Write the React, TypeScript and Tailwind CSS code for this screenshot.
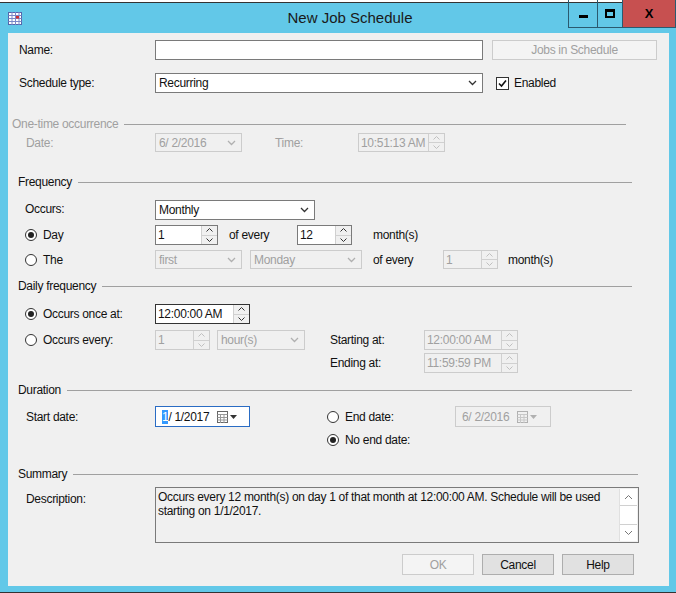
import React from "react";

const dis = "text-[#a0a0a0]";

function Chevron({ disabled }: { disabled?: boolean }) {
  return (
    <svg width="9" height="6" viewBox="0 0 9 6" className="mr-[5px] shrink-0">
      <path d="M1 1l3.5 3.5L8 1" fill="none" stroke={disabled ? "#b0b0b0" : "#333"} strokeWidth="1.3" />
    </svg>
  );
}

function Combo({ w, value, disabled }: { w: string; value: string; disabled?: boolean }) {
  return (
    <div
      className={`${w} h-full flex items-center justify-between border pl-[3px] whitespace-nowrap ${
        disabled ? "border-[#cccccc] text-[#a0a0a0] bg-[#f0f0f0]" : "border-[#7a7a7a] bg-white"
      }`}
    >
      <span>{value}</span>
      <Chevron disabled={disabled} />
    </div>
  );
}

function Spin({ w, value, disabled, focus }: { w: string; value: string; disabled?: boolean; focus?: boolean }) {
  const c = disabled ? "#c0c0c0" : "#333";
  return (
    <div
      className={`${w} h-full flex border whitespace-nowrap ${
        disabled ? "border-[#cccccc] text-[#a0a0a0]" : focus ? "border-[#333] bg-white" : "border-[#7a7a7a] bg-white"
      }`}
    >
      <span className="flex-1 pl-[2px] flex items-center overflow-hidden">{value}</span>
      <div className="w-[16px] shrink-0 flex flex-col border-l border-[#d0d0d0] bg-[#f0f0f0]">
        <div className="flex-1 flex items-center justify-center border-b border-[#d0d0d0]">
          <svg width="7" height="4" viewBox="0 0 7 4"><path d="M.5 3.5L3.5.5l3 3" fill="none" stroke={c} /></svg>
        </div>
        <div className="flex-1 flex items-center justify-center">
          <svg width="7" height="4" viewBox="0 0 7 4"><path d="M.5.5l3 3 3-3" fill="none" stroke={c} /></svg>
        </div>
      </div>
    </div>
  );
}

function Radio({ on, label, w }: { on?: boolean; label: string; w: string }) {
  return (
    <div className={`${w} flex items-center`}>
      <div className="w-[12px] h-[12px] rounded-full border border-[#333] bg-white flex items-center justify-center">
        {on && <div className="w-[6px] h-[6px] rounded-full bg-[#222]" />}
      </div>
      <span className="ml-[6px]">{label}</span>
    </div>
  );
}

function Header({ text, pr, pl, disabled }: { text: string; pr: string; pl: string; disabled?: boolean }) {
  return (
    <div className={`flex items-center h-[14px] ${pl} ${pr} ${disabled ? dis : ""}`}>
      <span>{text}</span>
      <div className="flex-1 ml-[6px] h-px bg-[#a0a0a0]" />
    </div>
  );
}

function DateBox({ w, value, disabled, focus }: { w: string; value: string; disabled?: boolean; focus?: boolean }) {
  return (
    <div
      className={`${w} h-full flex items-center border pl-[6px] whitespace-nowrap ${
        disabled ? "border-[#cccccc] text-[#a0a0a0]" : focus ? "border-[#2a6cc4] bg-white" : "border-[#7a7a7a]"
      }`}
    >
      {focus ? (
        <span>
          <span className="bg-[#3399ff] text-white">1</span>/  1/2017
        </span>
      ) : (
        <span>{value}</span>
      )}
      <svg width="22" height="12" viewBox="0 0 22 12" className="ml-[8px]">
        <rect x="0.5" y="0.5" width="10" height="11" fill="none" stroke={disabled ? "#b0b0b0" : "#666"} />
        <path d="M0.5 3.5h10M0.5 6.5h10M0.5 9h10M3.5 3v9M7 3v9" stroke={disabled ? "#c8c8c8" : "#999"} />
        <path d="M13 4h7l-3.5 4z" fill={disabled ? "#b0b0b0" : "#333"} />
      </svg>
    </div>
  );
}

function Btn({ label, disabled }: { label: string; disabled?: boolean }) {
  return (
    <div
      className={`w-[72px] h-full flex items-center justify-center border ${
        disabled ? "border-[#cccccc] text-[#a0a0a0] bg-[#f4f4f4]" : "border-[#adadad] bg-[#e1e1e1]"
      }`}
    >
      {label}
    </div>
  );
}

export default function App() {
  return (
    <div
      className="w-[676px] h-[593px] bg-white text-[12px] tracking-[-0.3px] text-[#111] overflow-hidden"
      style={{ fontFamily: '"Liberation Sans", Arial, sans-serif' }}
    >
      <div className="h-[3px] bg-white border-b border-[#333]" />
      <div className="w-[676px] bg-[#62c8e8] pl-[8px] pr-[7px] pb-[6px]">
        {/* title bar */}
        <div className="h-[30px] flex items-center">
          <svg width="14" height="13" viewBox="0 0 14 13">
            <rect x="0.5" y="0.5" width="13" height="12" fill="#fff" stroke="#5566aa" />
            <path d="M0.5 3.5h13M0.5 6.5h13M0.5 9.5h13M4 0v13M7.5 0v13M11 0v13" stroke="#7a88c8" />
            <rect x="8" y="4" width="3" height="2.5" fill="#d03030" />
          </svg>
          <div className="flex-1 text-center text-[15px] tracking-normal text-[#1a1a1a] pl-[110px]">New Job Schedule</div>
          <div className="flex self-start -mt-[4px] h-[29px] border border-[#2a5a70] mr-[-7px]">
            <div className="w-[29px] flex items-center justify-center border-r border-[#2a5a70]">
              <div className="w-[9px] h-[3px] bg-black mt-[6px]" />
            </div>
            <div className="w-[25px] flex items-center justify-center border-r border-[#2a5a70]">
              <div className="w-[10px] h-[9px] border-2 border-black border-t-[3px]" />
            </div>
            <div className="w-[52px] bg-[#c75050] flex items-center justify-center font-bold text-[13px] text-black">
              X
            </div>
          </div>
        </div>
        {/* body */}
        <div className="h-[553px] bg-[#f0f0f0] pt-[7px]">
          <div className="flex h-[20px] items-center pl-[11px]">
            <span className="w-[136px]">Name:</span>
            <div className="w-[328px] h-full border border-[#7a7a7a] bg-white" />
            <div className="ml-[9px] w-[165px] h-full border border-[#cccccc] bg-[#f4f4f4] text-[#a0a0a0] flex items-center justify-center">
              Jobs in Schedule
            </div>
          </div>
          <div className="flex h-[20px] items-center pl-[11px] mt-[13px]">
            <span className="w-[136px]">Schedule type:</span>
            <Combo w="w-[328px]" value="Recurring" />
            <div className="ml-[13px] w-[13px] h-[13px] border border-[#333] bg-white flex items-center justify-center">
              <svg width="9" height="9" viewBox="0 0 9 9"><path d="M1 4.5l2.5 2.5L8 1.5" fill="none" stroke="#111" strokeWidth="1.6" /></svg>
            </div>
            <span className="ml-[5px]">Enabled</span>
          </div>

          <div className="mt-[24px]"><Header text="One-time occurrence" pl="pl-[4px]" pr="pr-[43px]" disabled /></div>
          <div className={`flex h-[19px] items-center pl-[18px] mt-[2px] ${dis}`}>
            <span className="w-[129px]">Date:</span>
            <Combo w="w-[87px]" value="6/  2/2016" disabled />
            <span className="ml-[33px] w-[83px]">Time:</span>
            <Spin w="w-[87px]" value="10:51:13 AM" disabled />
          </div>

          <div className="mt-[23px]"><Header text="Frequency" pl="pl-[10px]" pr="pr-[37px]" /></div>
          <div className="flex h-[20px] items-center pl-[17px] mt-[11px]">
            <span className="w-[130px] self-start">Occurs:</span>
            <Combo w="w-[160px]" value="Monthly" />
          </div>
          <div className="flex h-[20px] items-center pl-[17px] mt-[5px]">
            <Radio on label="Day" w="w-[130px]" />
            <Spin w="w-[63px]" value="1" />
            <span className="ml-[11px] w-[68px]">of every</span>
            <Spin w="w-[55px]" value="12" />
            <span className="ml-[21px]">month(s)</span>
          </div>
          <div className="flex h-[19px] items-center pl-[17px] mt-[5px]">
            <Radio label="The" w="w-[130px]" />
            <Combo w="w-[87px]" value="first" disabled />
            <div className="ml-[8px] h-full"><Combo w="w-[112px]" value="Monday" disabled /></div>
            <span className="ml-[11px] w-[70px]">of every</span>
            <Spin w="w-[55px]" value="1" disabled />
            <span className="ml-[10px]">month(s)</span>
          </div>

          <div className="mt-[10px]"><Header text="Daily frequency" pl="pl-[10px]" pr="pr-[37px]" /></div>
          <div className="flex h-[20px] items-center pl-[17px] mt-[11px]">
            <Radio on label="Occurs once at:" w="w-[130px]" />
            <Spin w="w-[95px]" value="12:00:00 AM" focus />
          </div>
          <div className="flex h-[20px] items-center pl-[17px] mt-[6px]">
            <Radio label="Occurs every:" w="w-[130px]" />
            <Spin w="w-[55px]" value="1" disabled />
            <div className="ml-[7px] h-full"><Combo w="w-[88px]" value="hour(s)" disabled /></div>
            <span className="ml-[25px] w-[94px]">Starting at:</span>
            <Spin w="w-[94px]" value="12:00:00 AM" disabled />
          </div>
          <div className="flex h-[20px] items-center pl-[322px] mt-[3px]">
            <span className="w-[94px]">Ending at:</span>
            <Spin w="w-[94px]" value="11:59:59 PM" disabled />
          </div>

          <div className="mt-[10px]"><Header text="Duration" pl="pl-[10px]" pr="pr-[37px]" /></div>
          <div className="flex h-[21px] items-center pl-[18px] mt-[9px]">
            <span className="w-[129px]">Start date:</span>
            <DateBox w="w-[95px]" value="1/ 1/2017" focus />
            <div className="ml-[77px]"><Radio label="End date:" w="w-[128px]" /></div>
            <DateBox w="w-[96px]" value="6/  2/2016" disabled />
          </div>
          <div className="flex h-[18px] items-center pl-[319px] mt-[4px]">
            <Radio on label="No end date:" w="w-[128px]" />
          </div>

          <div className="mt-[18px]"><Header text="Summary" pl="pl-[10px]" pr="pr-[31px]" /></div>
          <div className="flex h-[56px] pl-[18px] mt-[6px]">
            <span className="w-[129px] pt-[3px]">Description:</span>
            <div className="w-[484px] h-full border border-[#7a7a7a] flex">
              <div className="flex-1 px-[2px] pt-[2px] leading-[14px]">
                Occurs every 12 month(s) on day 1 of that month at 12:00:00 AM. Schedule will be used starting on 1/1/2017.
              </div>
              <div className="w-[18px] m-[1px] flex flex-col bg-white border-l border-[#e0e0e0]">
                <div className="h-[17px] flex items-center justify-center border-b border-[#d0d0d0]">
                  <svg width="9" height="6" viewBox="0 0 9 6"><path d="M1 5l3.5-3.5L8 5" fill="none" stroke="#777" /></svg>
                </div>
                <div className="flex-1" />
                <div className="h-[17px] flex items-center justify-center border-t border-[#d0d0d0]">
                  <svg width="9" height="6" viewBox="0 0 9 6"><path d="M1 1l3.5 3.5L8 1" fill="none" stroke="#777" /></svg>
                </div>
              </div>
            </div>
          </div>
          <div className="flex h-[21px] justify-end gap-[8px] pr-[35px] mt-[11px]">
            <Btn label="OK" disabled />
            <Btn label="Cancel" />
            <Btn label="Help" />
          </div>
        </div>
      </div>
      <div className="h-px bg-[#333]" />
    </div>
  );
}
